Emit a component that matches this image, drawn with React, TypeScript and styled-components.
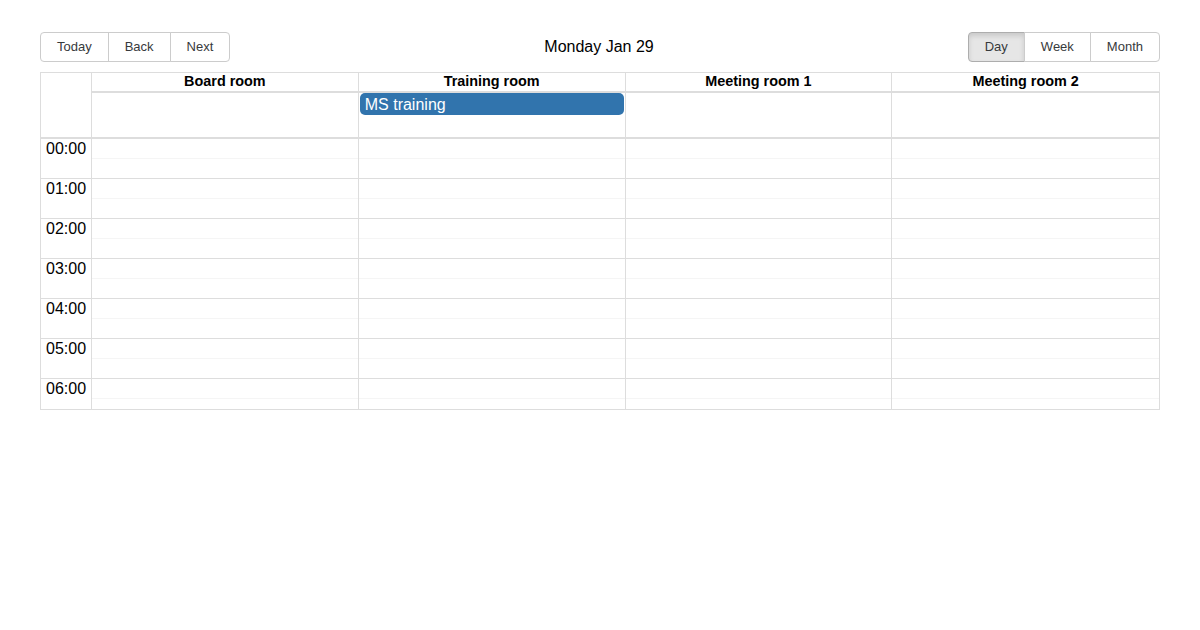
import React from "react";
import styled, { createGlobalStyle, css } from "styled-components";

const GlobalStyle = createGlobalStyle`
  html, body {
    margin: 0;
    padding: 0;
    background: #fff;
  }
  body {
    font-family: "Liberation Sans", Arial, Helvetica, sans-serif;
    font-size: 16px;
    color: #000;
  }
  * { box-sizing: border-box; }
`;

const Page = styled.div`
  padding: 32px 40px;
`;

const Toolbar = styled.div`
  display: flex;
  align-items: center;
  margin-bottom: 10px;
  font-size: 16px;
`;

const BtnGroup = styled.div`
  display: inline-flex;
  white-space: nowrap;
`;

const Button = styled.button<{ $active?: boolean }>`
  font-family: "Liberation Sans", Arial, Helvetica, sans-serif;
  font-size: 13px;
  line-height: 16px;
  height: 30px;
  color: #373a3c;
  background: #fff;
  border: 1px solid #ccc;
  padding: 6px 16px;
  margin: 0;
  border-radius: 0;
  cursor: pointer;
  & + & {
    margin-left: -1px;
  }
  &:first-child {
    border-radius: 4px 0 0 4px;
  }
  &:last-child {
    border-radius: 0 4px 4px 0;
  }
  ${(p) =>
    p.$active &&
    css`
      background: #e6e6e6;
      border-color: #adadad;
      box-shadow: inset 0 3px 5px rgba(0, 0, 0, 0.125);
    `}
`;

const Title = styled.span`
  flex: 1;
  padding: 0 10px;
  text-align: center;
  color: #000;
`;

const Calendar = styled.div`
  border: 1px solid #ddd;
  display: flex;
  flex-direction: column;
`;

const Header = styled.div`
  display: grid;
  grid-template-columns: 51px 1fr;
`;

const Corner = styled.div`
  border-right: 1px solid #ddd;
`;

const HeaderContent = styled.div`
  display: flex;
  flex-direction: column;
`;

const ResourceRow = styled.div`
  display: grid;
  grid-template-columns: repeat(4, 1fr);
  border-bottom: 1px solid #ddd;
`;

const ResourceHeader = styled.div<{ $last?: boolean }>`
  height: 19px;
  border-bottom: 1px solid #ddd;
  border-right: ${(p) => (p.$last ? "none" : "1px solid #ddd")};
  padding: 0 3px;
  font-weight: bold;
  font-size: 14.4px;
  line-height: 17px;
  text-align: center;
  white-space: nowrap;
  overflow: hidden;
`;

const AllDayRow = styled.div`
  display: grid;
  grid-template-columns: repeat(4, 1fr);
  height: 44px;
`;

const AllDayCell = styled.div<{ $last?: boolean }>`
  border-right: ${(p) => (p.$last ? "none" : "1px solid #ddd")};
  padding: 0 1px;
  min-width: 0;
`;

const Event = styled.div`
  background: #3174ad;
  color: #fff;
  border-radius: 5px;
  padding: 3px 5px 1px;
  height: 22px;
  font-size: 16px;
  line-height: 18px;
  white-space: nowrap;
  overflow: hidden;
`;

const Body = styled.div`
  border-top: 2px solid #ddd;
  height: 272px;
  overflow: hidden;
  display: grid;
  grid-template-columns: 51px repeat(4, 1fr);
  align-items: start;
`;

const Column = styled.div<{ $last?: boolean }>`
  border-right: ${(p) => (p.$last ? "none" : "1px solid #ddd")};
  display: flex;
  flex-direction: column;
`;

const SlotGroup = styled.div`
  height: 40px;
  border-bottom: 1px solid #ddd;
  display: flex;
  flex-direction: column;
`;

const Slot = styled.div<{ $second?: boolean }>`
  flex: 1;
  border-top: ${(p) => (p.$second ? "1px solid #f5f5f5" : "none")};
`;

const Label = styled.span`
  display: block;
  padding: 1px 5px 0;
  font-size: 16px;
  line-height: 18px;
  color: #000;
`;

const resources = ["Board room", "Training room", "Meeting room 1", "Meeting room 2"];
const hours = ["00:00", "01:00", "02:00", "03:00", "04:00", "05:00", "06:00"];

export default function App() {
  return (
    <>
      <GlobalStyle />
      <Page>
        <Toolbar>
          <BtnGroup>
            <Button>Today</Button>
            <Button>Back</Button>
            <Button>Next</Button>
          </BtnGroup>
          <Title>Monday Jan 29</Title>
          <BtnGroup>
            <Button $active>Day</Button>
            <Button>Week</Button>
            <Button>Month</Button>
          </BtnGroup>
        </Toolbar>
        <Calendar>
          <Header>
            <Corner />
            <HeaderContent>
              <ResourceRow>
                {resources.map((r, i) => (
                  <ResourceHeader key={r} $last={i === resources.length - 1}>
                    {r}
                  </ResourceHeader>
                ))}
              </ResourceRow>
              <AllDayRow>
                {resources.map((r, i) => (
                  <AllDayCell key={r} $last={i === resources.length - 1}>
                    {r === "Training room" && <Event>MS training</Event>}
                  </AllDayCell>
                ))}
              </AllDayRow>
            </HeaderContent>
          </Header>
          <Body>
            <Column>
              {hours.map((h) => (
                <SlotGroup key={h}>
                  <Slot>
                    <Label>{h}</Label>
                  </Slot>
                  <Slot />
                </SlotGroup>
              ))}
            </Column>
            {resources.map((r, i) => (
              <Column key={r} $last={i === resources.length - 1}>
                {hours.map((h) => (
                  <SlotGroup key={h}>
                    <Slot />
                    <Slot $second />
                  </SlotGroup>
                ))}
              </Column>
            ))}
          </Body>
        </Calendar>
      </Page>
    </>
  );
}
